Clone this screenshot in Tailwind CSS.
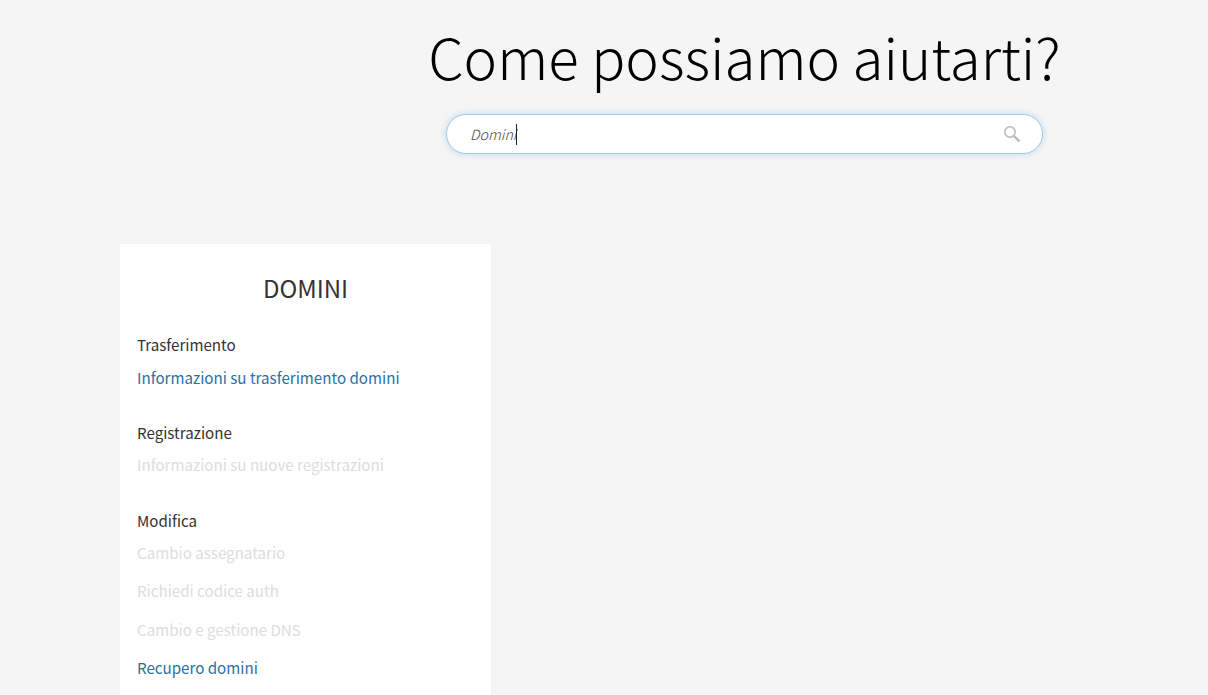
<!DOCTYPE html>
<html lang="it">
<head>
  <meta charset="UTF-8">
  <meta name="viewport" content="width=device-width,initial-scale=1.0">
  <title>Come possiamo aiutarti?</title>
  <script src="https://cdn.jsdelivr.net/npm/@tailwindcss/browser@4"></script>
</head>
<body class="bg-[#f5f5f5] h-[695px] overflow-hidden font-['Noto_Sans_CJK_SC','Noto_Sans',sans-serif]">
  <!-- ricerca -->
  <section class="flex flex-col items-center w-[631px] ml-[429px] pt-[19px]">
    <h1 class="text-[56.5px] leading-[72px] font-extralight text-black whitespace-nowrap">Come possiamo aiutarti?</h1>
    <div class="mt-[23px] w-[597px] h-[40px] flex items-center justify-between pl-[23px] pr-[21px] bg-white rounded-full border border-[#a3cce6] shadow-[0_0_7px_rgba(102,175,233,0.4)]">
      <div class="flex items-center h-full">
        <span class="italic font-extralight text-[14.2px] pt-[2px] text-[#444444]">Domini</span>
        <span class="w-px h-[21px] bg-[#222222]"></span>
      </div>
      <svg class="w-[18px] h-[18px] text-[#bbbbbb]" viewBox="0 0 18 18" fill="none" stroke="currentColor" stroke-width="1.6">
        <circle cx="7" cy="7" r="5.2"/>
        <path d="M10.8 10.8 L16.5 16.5" stroke-width="2.4"/>
      </svg>
    </div>
  </section>

  <!-- card domini -->
  <section class="mt-[90px] ml-[120px] w-[371px] h-[460px] bg-white px-[17px] pt-[26px]">
    <h2 class="text-center text-[24px] leading-[36px] text-[#333333]">DOMINI</h2>

    <div class="mt-[26px]">
      <h3 class="text-[15.13px] leading-[24px] text-[#333333]">Trasferimento</h3>
      <a href="#" class="block mt-[9px] text-[15.13px] leading-[24px] text-[#2a719f]">Informazioni su trasferimento domini</a>
    </div>

    <div class="mt-[31px]">
      <h3 class="text-[15.13px] leading-[24px] text-[#333333]">Registrazione</h3>
      <a href="#" class="block mt-[8px] text-[15.13px] leading-[24px] text-[#dddddd]">Informazioni su nuove registrazioni</a>
    </div>

    <div class="mt-[32px]">
      <h3 class="text-[15.13px] leading-[24px] text-[#333333]">Modifica</h3>
      <div class="mt-[8px] flex flex-col gap-[14.4px]">
        <a href="#" class="block text-[15.13px] leading-[24px] text-[#dddddd]">Cambio assegnatario</a>
        <a href="#" class="block text-[15.13px] leading-[24px] text-[#dddddd]">Richiedi codice auth</a>
        <a href="#" class="block text-[15.13px] leading-[24px] text-[#dddddd]">Cambio e gestione DNS</a>
        <a href="#" class="block text-[15.13px] leading-[24px] text-[#2a719f]">Recupero domini</a>
      </div>
    </div>
  </section>
</body>
</html>
